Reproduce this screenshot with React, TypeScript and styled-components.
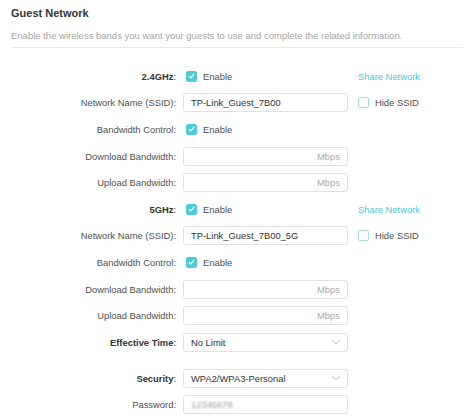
import React from "react";
import styled, { createGlobalStyle } from "styled-components";

const GlobalStyle = createGlobalStyle`
  body {
    margin: 0;
    background: #fff;
    font-family: "Liberation Sans", Arial, sans-serif;
  }
`;

const TEAL = "#4acbd6";

const Page = styled.div`
  padding: 7px 11px 0;
  width: 452px;
`;

const Title = styled.h2`
  margin: 0;
  font-size: 11px;
  line-height: 13px;
  font-weight: bold;
  color: #333;
`;

const Intro = styled.p`
  margin: 10px 0 0;
  padding-bottom: 5px;
  font-size: 9.5px;
  line-height: 12px;
  color: #a6a6a6;
  border-bottom: 1px solid #e8e8e8;
`;

const Form = styled.div`
  margin-top: 15px;
`;

const Row = styled.div<{ $spaced?: boolean }>`
  display: grid;
  grid-template-columns: 165px 165px 1fr;
  column-gap: 7px;
  align-items: center;
  height: 26.6px;
  margin-top: ${(p) => (p.$spaced ? "9.4px" : "0")};
`;

const Label = styled.div<{ $bold?: boolean }>`
  text-align: right;
  font-size: 9.4px;
  color: ${(p) => (p.$bold ? "#333" : "#505050")};
  font-weight: ${(p) => (p.$bold ? "bold" : "normal")};
  white-space: nowrap;

  span {
    font-weight: normal;
  }
`;

const Box = styled.div`
  box-sizing: border-box;
  height: 19px;
  border: 1px solid #e0e0e0;
  border-radius: 3px;
  padding: 0 7px;
  display: flex;
  align-items: center;
  justify-content: space-between;
  font-size: 9.4px;
  color: #333;
`;

const Unit = styled.span`
  margin-left: auto;
  color: #aaa;
`;

const Hidden = styled.span`
  color: #999;
  filter: blur(1.2px);
`;

const Check = styled.label`
  display: flex;
  align-items: center;
  gap: 6px;
  margin-left: 3px;
  font-size: 9.4px;
  color: #505050;
`;

const Mark = styled.span<{ $on?: boolean }>`
  box-sizing: border-box;
  width: 11px;
  height: 11px;
  border-radius: 2px;
  background: ${(p) => (p.$on ? TEAL : "#fff")};
  border: 1px solid ${(p) => (p.$on ? TEAL : "#a9dde2")};
  display: flex;
  align-items: center;
  justify-content: center;
`;

const Link = styled.a`
  margin-left: 3px;
  font-size: 9.4px;
  color: ${TEAL};
  text-decoration: none;
`;

const Tick = () => (
  <svg width="7" height="6" viewBox="0 0 7 6">
    <path d="M0.8 3.1 L2.7 4.9 L6.2 1" fill="none" stroke="#fff" strokeWidth="1.3" />
  </svg>
);

const Chevron = () => (
  <svg width="8" height="5" viewBox="0 0 8 5">
    <path d="M0.5 0.5 L4 4 L7.5 0.5" fill="none" stroke="#bbb" strokeWidth="1" />
  </svg>
);

const CheckBox = ({ on, text }: { on?: boolean; text: string }) => (
  <Check>
    <Mark $on={on}>{on && <Tick />}</Mark>
    {text}
  </Check>
);

const BandRows = ({ band, ssid }: { band: string; ssid: string }) => (
  <>
    <Row>
      <Label $bold>
        {band}
        <span>:</span>
      </Label>
      <CheckBox on text="Enable" />
      <Link>Share Network</Link>
    </Row>
    <Row>
      <Label>Network Name (SSID):</Label>
      <Box>{ssid}</Box>
      <CheckBox text="Hide SSID" />
    </Row>
    <Row>
      <Label>Bandwidth Control:</Label>
      <CheckBox on text="Enable" />
    </Row>
    <Row>
      <Label>Download Bandwidth:</Label>
      <Box>
        <Unit>Mbps</Unit>
      </Box>
    </Row>
    <Row>
      <Label>Upload Bandwidth:</Label>
      <Box>
        <Unit>Mbps</Unit>
      </Box>
    </Row>
  </>
);

const App = () => {
  return (
    <Page>
      <GlobalStyle />
      <Title>Guest Network</Title>
      <Intro>
        Enable the wireless bands you want your guests to use and complete the related information.
      </Intro>
      <Form>
        <BandRows band="2.4GHz" ssid="TP-Link_Guest_7B00" />
        <BandRows band="5GHz" ssid="TP-Link_Guest_7B00_5G" />
        <Row>
          <Label $bold>
            Effective Time<span>:</span>
          </Label>
          <Box>
            No Limit
            <Chevron />
          </Box>
        </Row>
        <Row $spaced>
          <Label $bold>
            Security<span>:</span>
          </Label>
          <Box>
            WPA2/WPA3-Personal
            <Chevron />
          </Box>
        </Row>
        <Row>
          <Label>Password:</Label>
          <Box>
            <Hidden>12345678</Hidden>
          </Box>
        </Row>
      </Form>
    </Page>
  );
};

export default App;
